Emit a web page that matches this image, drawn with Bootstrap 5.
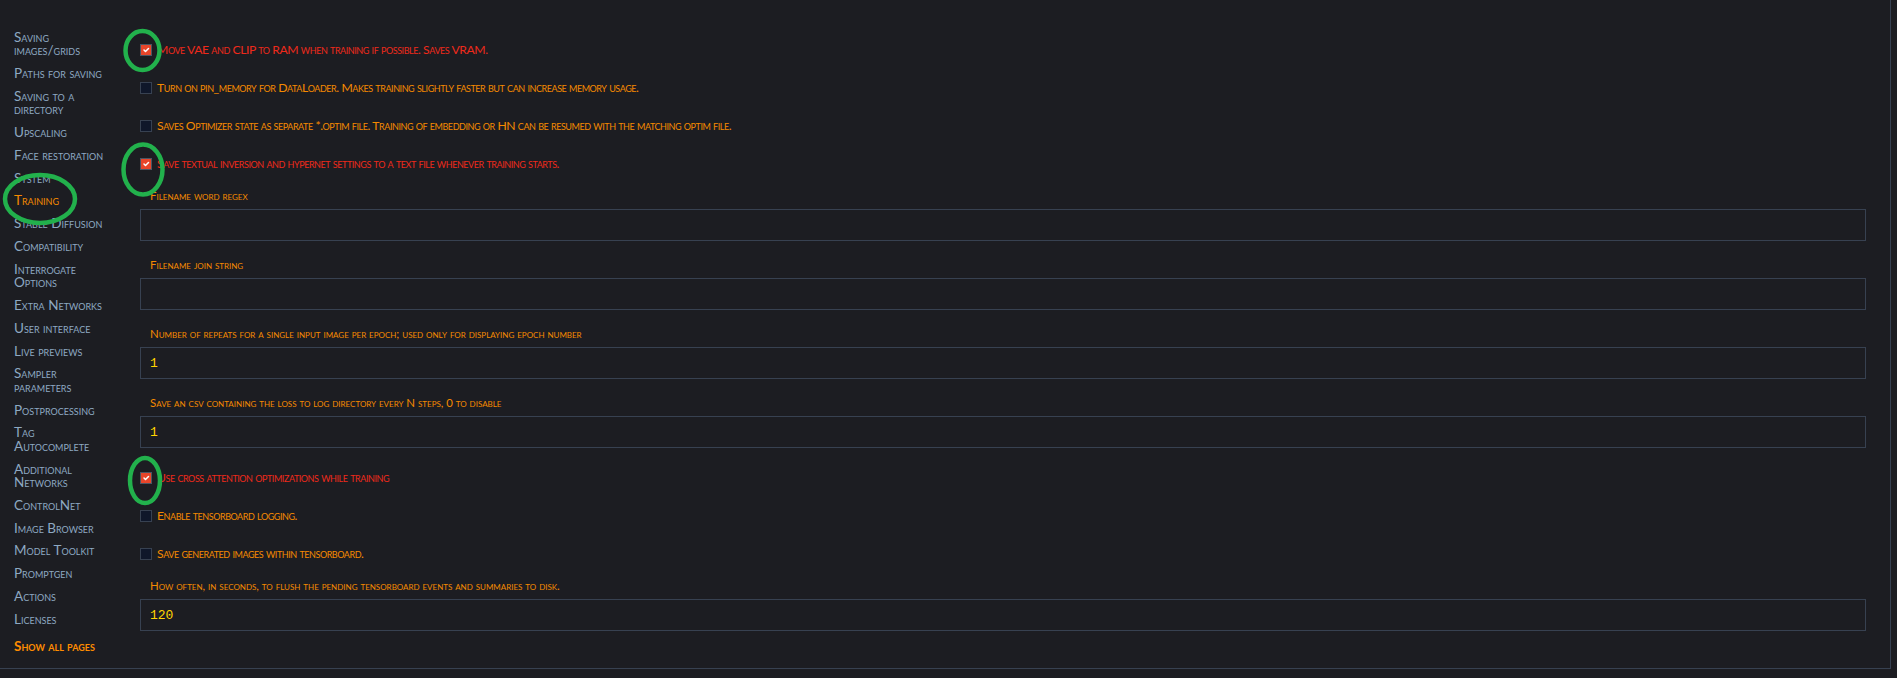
<!DOCTYPE html>
<html lang="en">
<head>
<meta charset="UTF-8">
<meta name="viewport" content="width=device-width, initial-scale=1.0">
<title>Settings - Training</title>
<link rel="stylesheet" href="https://cdn.jsdelivr.net/npm/bootstrap@5.3.2/dist/css/bootstrap.min.css">
<style>
    html, body {
        height: 100%;
        overflow: hidden;
    }
    body {
        background-color: #1c1d22;
        font-family: "Lato", "Liberation Sans", sans-serif;
        font-variant: small-caps;
        font-size: 12.2px;
        position: relative;
    }
    .settings-panel {
        width: 1891px;
        height: 669px;
        border-right: 1px solid #374151;
        border-bottom: 1px solid #374151;
    }
    /* left menu */
    .side-menu {
        width: 140px;
        flex: none;
        padding: 26px 33px 0 14px;
    }
    .side-menu .nav-link {
        padding: 4.65px 0;
        line-height: 13.5px;
        font-size: 13.5px;
        color: #8ea9c2;
    }
    .side-menu .nav-link.current {
        color: #f58a00;
    }
    .side-menu .nav-link.show-all {
        margin-top: 4px;
        color: #ff8c00;
        font-size: 13.5px;
        font-weight: 700;
        white-space: nowrap;
    }
    /* right side */
    .opts-pane {
        flex: 1;
        padding: 31px 24px 0 0;
    }
    .opt-check {
        height: 38px;
        margin: 0;
        padding: 0;
        gap: 5px;
        color: #f58a00;
        letter-spacing: -0.44px;
    }
    .opt-check.on {
        color: #ee2a1b;
    }
    .opt-check .form-check-input {
        width: 12px;
        height: 12px;
        margin: 0;
        flex: none;
        border: 1px solid #374151;
        border-radius: 0;
        background-color: #0f172a;
    }
    .opt-check .form-check-input:checked {
        background-color: #e8452a;
        border-color: #4b5563;
    }
    .opt-field {
        margin-bottom: 11px;
    }
    .opt-field .form-label {
        display: block;
        height: 26px;
        line-height: 26px;
        margin: 0;
        padding-left: 10px;
        font-size: 11.4px;
        color: #f58a00;
    }
    .opt-field .form-control {
        height: 32px;
        padding: 0 9px;
        border: 1px solid #374151;
        border-radius: 0;
        background-color: #1c1d22;
        color: #ffd500;
        font-family: "Liberation Mono", monospace;
        font-size: 13px;
    }
    .circles {
        position: absolute;
        left: 0;
        top: 0;
        pointer-events: none;
    }
</style>
</head>
<body>
<div class="settings-panel d-flex">
    <nav class="side-menu nav flex-column flex-nowrap">
        <a class="nav-link" href="#">Saving images/grids</a>
        <a class="nav-link" href="#">Paths for saving</a>
        <a class="nav-link" href="#">Saving to a directory</a>
        <a class="nav-link" href="#">Upscaling</a>
        <a class="nav-link" href="#">Face restoration</a>
        <a class="nav-link" href="#">System</a>
        <a class="nav-link current" href="#">Training</a>
        <a class="nav-link" href="#">Stable Diffusion</a>
        <a class="nav-link" href="#">Compatibility</a>
        <a class="nav-link" href="#">Interrogate Options</a>
        <a class="nav-link" href="#">Extra Networks</a>
        <a class="nav-link" href="#">User interface</a>
        <a class="nav-link" href="#">Live previews</a>
        <a class="nav-link" href="#">Sampler parameters</a>
        <a class="nav-link" href="#">Postprocessing</a>
        <a class="nav-link" href="#">Tag Autocomplete</a>
        <a class="nav-link" href="#">Additional Networks</a>
        <a class="nav-link" href="#">ControlNet</a>
        <a class="nav-link" href="#">Image Browser</a>
        <a class="nav-link" href="#">Model Toolkit</a>
        <a class="nav-link" href="#">Promptgen</a>
        <a class="nav-link" href="#">Actions</a>
        <a class="nav-link" href="#">Licenses</a>
        <a class="nav-link show-all" href="#">Show all pages</a>
    </nav>
    <form class="opts-pane">
        <label class="form-check opt-check on d-flex align-items-center">
            <input class="form-check-input" type="checkbox" checked>
            <span>Move VAE and CLIP to RAM when training if possible. Saves VRAM.</span>
        </label>
        <label class="form-check opt-check d-flex align-items-center">
            <input class="form-check-input" type="checkbox">
            <span>Turn on pin_memory for DataLoader. Makes training slightly faster but can increase memory usage.</span>
        </label>
        <label class="form-check opt-check d-flex align-items-center">
            <input class="form-check-input" type="checkbox">
            <span>Saves Optimizer state as separate *.optim file. Training of embedding or HN can be resumed with the matching optim file.</span>
        </label>
        <label class="form-check opt-check on d-flex align-items-center">
            <input class="form-check-input" type="checkbox" checked>
            <span>Save textual inversion and hypernet settings to a text file whenever training starts.</span>
        </label>
        <div class="opt-field">
            <label class="form-label">Filename word regex</label>
            <input class="form-control" type="text">
        </div>
        <div class="opt-field">
            <label class="form-label">Filename join string</label>
            <input class="form-control" type="text">
        </div>
        <div class="opt-field">
            <label class="form-label">Number of repeats for a single input image per epoch; used only for displaying epoch number</label>
            <input class="form-control" type="text" value="1">
        </div>
        <div class="opt-field">
            <label class="form-label">Save an csv containing the loss to log directory every N steps, 0 to disable</label>
            <input class="form-control" type="text" value="1">
        </div>
        <label class="form-check opt-check on d-flex align-items-center">
            <input class="form-check-input" type="checkbox" checked>
            <span>Use cross attention optimizations while training</span>
        </label>
        <label class="form-check opt-check d-flex align-items-center">
            <input class="form-check-input" type="checkbox">
            <span>Enable tensorboard logging.</span>
        </label>
        <label class="form-check opt-check d-flex align-items-center">
            <input class="form-check-input" type="checkbox">
            <span>Save generated images within tensorboard.</span>
        </label>
        <div class="opt-field">
            <label class="form-label">How often, in seconds, to flush the pending tensorboard events and summaries to disk.</label>
            <input class="form-control" type="text" value="120">
        </div>
    </form>
</div>

<!-- green hand drawn circles on top of the screenshot -->
<svg class="circles" width="1897" height="678" fill="none" stroke="#22b14c" stroke-width="4.5">
    <ellipse cx="142.5" cy="50.5" rx="17" ry="19.5"/>
    <ellipse cx="143" cy="169.5" rx="19.5" ry="25"/>
    <ellipse cx="40" cy="199" rx="35" ry="24"/>
    <ellipse cx="145" cy="480.5" rx="15" ry="22.5"/>
</svg>
<script src="https://cdn.jsdelivr.net/npm/bootstrap@5.3.2/dist/js/bootstrap.bundle.min.js"></script>
</body>
</html>
